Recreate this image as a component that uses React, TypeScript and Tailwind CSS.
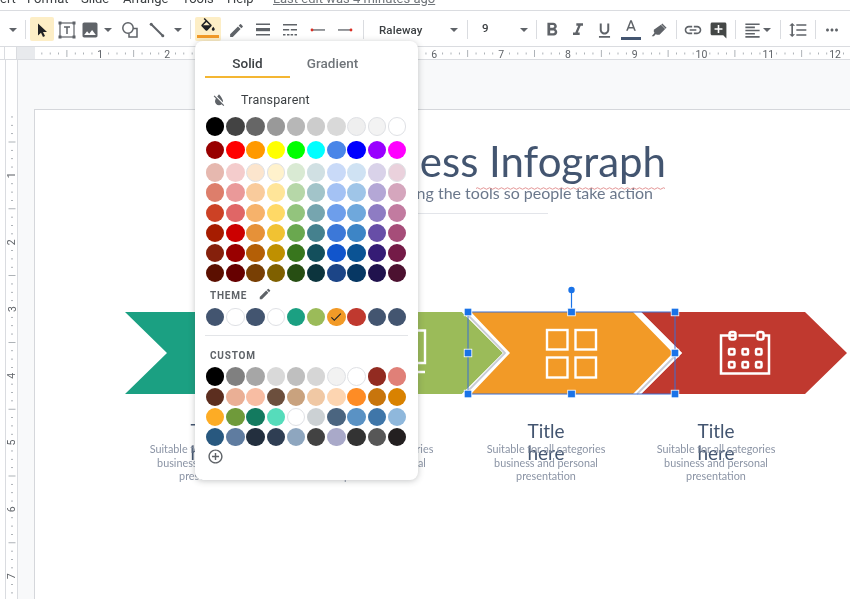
import React from "react";
import {
  MdEdit, MdFormatBold, MdFormatItalic, MdFormatUnderlined, MdLink, MdAddComment,
  MdFormatAlignLeft, MdFormatLineSpacing, MdMoreHoriz, MdImage, MdFormatColorReset, MdCheck,
  MdAddCircleOutline,
} from "react-icons/md";

const ICON = "#5f6368";

const rowsA = [
  ["#000000","#434343","#666666","#999999","#b7b7b7","#cccccc","#d9d9d9","#efefef","#f3f3f3","#ffffff"],
  ["#980000","#ff0000","#ff9900","#ffff00","#00ff00","#00ffff","#4a86e8","#0000ff","#9900ff","#ff00ff"],
];
const rowsB = [
  ["#e6b8af","#f4cccc","#fce5cd","#fff2cc","#d9ead3","#d0e0e3","#c9daf8","#cfe2f3","#d9d2e9","#ead1dc"],
  ["#dd7e6b","#ea9999","#f9cb9c","#ffe599","#b6d7a8","#a2c4c9","#a4c2f4","#9fc5e8","#b4a7d6","#d5a6bd"],
  ["#cc4125","#e06666","#f6b26b","#ffd966","#93c47d","#76a5af","#6d9eeb","#6fa8dc","#8e7cc3","#c27ba0"],
  ["#a61c00","#cc0000","#e69138","#f1c232","#6aa84f","#45818e","#3c78d8","#3d85c6","#674ea7","#a64d79"],
  ["#85200c","#990000","#b45f06","#bf9000","#38761d","#134f5c","#1155cc","#0b5394","#351c75","#741b47"],
  ["#5b0f00","#660000","#783f04","#7f6000","#274e13","#0c343d","#1c4587","#073763","#20124d","#4c1130"],
];
const theme = ["#435570","#ffffff","#435570","#ffffff","#1ba082","#9bbb59","#f29a27","#c0392f","#435570","#435570"];
const custom = [
  ["#000000","#808080","#a6a6a6","#d9d9d9","#bfbfbf","#d6d6d6","#f2f2f2","#ffffff","#922b21","#e08078"],
  ["#5c2e1f","#eaaf95","#f8bda3","#6c4f3d","#c9a27e","#f0c8a4","#fdd5b1","#fe8c25","#c8750c","#d98200"],
  ["#fdac25","#6f9a3a","#137a5f","#56dcbb","#ffffff","#ccd1d4","#4b6580","#5a92c4","#3f76a9","#8fb8dc"],
  ["#28587f","#5f7ca0","#232f3e","#2f3e53","#8ea6bf","#424242","#a9a9c9","#333333","#575757","#231f20"],
];
const LIGHT = ["#ffffff","#f3f3f3","#efefef","#f2f2f2","#fff2cc","#fce5cd","#ead1dc"];

function Swatch({ c, checked }: { c: string; checked?: boolean }) {
  return (
    <div className="w-[20.2px] h-full flex items-center justify-center">
      <div
        className={"w-[18.4px] h-[18.4px] rounded-full flex items-center justify-center " + (LIGHT.includes(c) ? "border border-[#dfe1e5]" : "")}
        style={{ backgroundColor: c }}
      >
        {checked && <MdCheck size={14} color="#202124" />}
      </div>
    </div>
  );
}

function Rows({ rows, className }: { rows: string[][]; className: string }) {
  return (
    <div className={className}>
      {rows.map((r, i) => (
        <div key={i} className="flex h-[20.1px]">
          {r.map((c, j) => <Swatch key={j} c={c} />)}
        </div>
      ))}
    </div>
  );
}

const Caret = () => (
  <svg width="8" height="4" viewBox="0 0 8 4"><path d="M0 0h8L4 4z" fill={ICON} /></svg>
);
const Sep = ({ className }: { className: string }) => <div className={"w-px h-[19px] bg-[#dadce0] shrink-0 " + className} />;

function Cell({ w, children, className = "" }: { w: string; children?: React.ReactNode; className?: string }) {
  return <div className={"h-[24px] pt-[2px] flex items-center justify-center shrink-0 " + w + " " + className}>{children}</div>;
}

function Toolbar() {
  return (
    <div className="h-[36px] flex items-center border-b border-[#dadce0] pt-[1px] bg-white text-[#444746]">
      <Cell w="w-[25px]"><Caret /></Cell>
      <Sep className="" />
      <Cell w="w-[24px]" className="ml-[4px] bg-[#fdeec6] rounded-[2px]">
        <svg width="16" height="16" viewBox="0 0 16 16"><path d="M4 1.5v12l3-2.8 2 4.3 2-1-2-4.1h4z" fill="#202124" /></svg>
      </Cell>
      <Cell w="w-[24px]" className="ml-[1px]">
        <svg width="18" height="18" viewBox="0 0 18 18" fill="none" stroke={ICON}>
          <rect x="2" y="2" width="14" height="14" strokeWidth="1.2" />
          <path d="M6 6h6M9 6v7" strokeWidth="1.5" />
          <g fill={ICON} stroke="none"><rect x="0.5" y="0.5" width="3" height="3" /><rect x="14.5" y="0.5" width="3" height="3" /><rect x="0.5" y="14.5" width="3" height="3" /><rect x="14.5" y="14.5" width="3" height="3" /></g>
        </svg>
      </Cell>
      <Cell w="w-[22px]"><MdImage size={20} color={ICON} /></Cell>
      <Cell w="w-[14px]"><Caret /></Cell>
      <Cell w="w-[24px]" className="ml-[3px]">
        <svg width="18" height="18" viewBox="0 0 18 18" fill="none" stroke={ICON} strokeWidth="1.5">
          <circle cx="7" cy="7" r="5.2" /><path d="M12 7.500h4V16H8v-3.500" />
        </svg>
      </Cell>
      <Cell w="w-[24px]" className="ml-[3px]">
        <svg width="18" height="18" viewBox="0 0 18 18"><path d="M3 3l12 12" stroke={ICON} strokeWidth="2" /><circle cx="3.2" cy="3.2" r="1.5" fill={ICON} /><circle cx="14.8" cy="14.8" r="1.5" fill={ICON} /></svg>
      </Cell>
      <Cell w="w-[14px]" className="ml-[2px]"><Caret /></Cell>
      <Sep className="ml-[5px]" />
      <Cell w="w-[26px]" className="ml-[4px] bg-[#fdeec6] rounded-[2px] relative">
        <svg width="18" height="18" viewBox="0 0 24 24" className="-mt-[7px]">
          <path d="M16.56 8.94L7.62 0 6.21 1.41l2.38 2.38-5.15 5.15c-.59.59-.59 1.54 0 2.12l5.5 5.5c.29.29.68.44 1.06.44s.77-.15 1.06-.44l5.5-5.5c.59-.58.59-1.53 0-2.12zM5.21 10L10 5.21 14.79 10H5.21zM19 11.5s-2 2.17-2 3.5c0 1.1.9 2 2 2s2-.9 2-2c0-1.33-2-3.5-2-3.5z" fill="#202124" />
          <path d="M5 10h10l-6 6z" fill="#202124" />
        </svg>
        <div className="absolute left-[2px] right-[2px] bottom-[3px] h-[3px] bg-[#f29a27]" />
      </Cell>
      <Cell w="w-[24px]" className="ml-[3px]"><MdEdit size={17} color={ICON} /></Cell>
      <Cell w="w-[24px]" className="ml-[3px]">
        <svg width="16" height="16" viewBox="0 0 16 16" fill={ICON}><rect x="1" y="1.5" width="14" height="1.5" /><rect x="1" y="6" width="14" height="3.2" /><rect x="1" y="12" width="14" height="1.5" /></svg>
      </Cell>
      <Cell w="w-[24px]" className="ml-[3px]">
        <svg width="16" height="16" viewBox="0 0 16 16" fill={ICON}><rect x="1" y="2" width="14" height="1.5" /><rect x="1" y="7" width="6.2" height="1.5" /><rect x="8.8" y="7" width="6.2" height="1.5" /><path d="M1 12h2.5v1.5H1zM5 12h2.5v1.5H5zM8.6 12h2.5v1.5H8.6zM12.5 12H15v1.5h-2.500z" /></svg>
      </Cell>
      <Cell w="w-[24px]" className="ml-[4px]">
        <svg width="16" height="6" viewBox="0 0 16 6"><rect x="1" y="2.300" width="14" height="1.300" fill={ICON} /><circle cx="2" cy="3" r="1.400" fill="#d93025" /></svg>
      </Cell>
      <Cell w="w-[24px]" className="ml-[3px]">
        <svg width="16" height="6" viewBox="0 0 16 6"><rect x="1" y="2.300" width="14" height="1.300" fill={ICON} /><circle cx="14" cy="3" r="1.400" fill="#d93025" /></svg>
      </Cell>
      <Sep className="ml-[6px]" />
      <div className="ml-[15px] w-[70px] mt-[3px] text-[11.5px] font-medium tracking-[0.1px] text-[#3c4043] shrink-0">Raleway</div>
      <Cell w="w-[10px]"><Caret /></Cell>
      <Sep className="ml-[8px]" />
      <div className="ml-[14px] w-[37px] text-[11.500px] font-medium text-[#3c4043] shrink-0">9</div>
      <Cell w="w-[10px]"><Caret /></Cell>
      <Sep className="ml-[7px]" />
      <Cell w="w-[22px]" className="ml-[4px]"><MdFormatBold size={22} color={ICON} /></Cell>
      <Cell w="w-[22px]" className="ml-[4px]"><MdFormatItalic size={20} color={ICON} /></Cell>
      <Cell w="w-[22px]" className="ml-[4px]"><MdFormatUnderlined size={19} color={ICON} /></Cell>
      <Cell w="w-[24px]" className="ml-[4px] relative">
        <svg width="18" height="18" viewBox="0 0 24 24" className="-mt-[7px]"><path d="M11 3L5.500 17h2.250l1.120-3h6.250l1.120 3h2.250L13 3h-2zm-1.380 9L12 5.670 14.380 12H9.620z" fill={ICON} /></svg>
        <div className="absolute left-[2px] right-[2px] bottom-[1px] h-[3px] bg-[#435570]" />
      </Cell>
      <Cell w="w-[24px]" className="ml-[4px]">
        <svg width="17" height="17" viewBox="0 0 24 24" fill={ICON}><path d="M14 4l6 6-8 8H8l-1-1-3 3H1l4-5-1-1v-3z" /><path d="M16 2l6 6-1.500 1.500-6-6z" /></svg>
      </Cell>
      <Sep className="ml-[5px]" />
      <Cell w="w-[24px]" className="ml-[4px]"><MdLink size={20} color={ICON} /></Cell>
      <Cell w="w-[24px]" className="ml-[1px]"><MdAddComment size={19} color="#444746" /></Cell>
      <Sep className="ml-[5px]" />
      <Cell w="w-[20px]" className="ml-[6px]"><MdFormatAlignLeft size={19} color={ICON} /></Cell>
      <Cell w="w-[10px]"><Caret /></Cell>
      <Sep className="ml-[8px]" />
      <Cell w="w-[24px]" className="ml-[5px]"><MdFormatLineSpacing size={20} color={ICON} /></Cell>
      <Sep className="ml-[5px]" />
      <Cell w="w-[24px]" className="ml-[4px]"><MdMoreHoriz size={18} color={ICON} /></Cell>
    </div>
  );
}

function HRuler() {
  const ticks: React.ReactNode[] = [];
  for (let i = 1; i < 100; i++) {
    const x = 33.5 + i * 8.35;
    if (i % 8 === 0) {
      ticks.push(<text key={i} x={x} y={10.5} textAnchor="middle" fontSize="10.5" fill="#5f6368" fontFamily="Roboto">{i / 8}</text>);
    } else if (i % 4 === 0) {
      ticks.push(<rect key={i} x={x - 0.4} y={3} width={0.8} height={7} fill="#9aa0a6" />);
    } else {
      ticks.push(<rect key={i} x={x - 0.4} y={5.5} width={0.8} height={2} fill="#9aa0a6" />);
    }
  }
  return (
    <div className="h-[13px] flex bg-white border-b border-[#dadce0]">
      <div className="w-[5px] border-r border-[#dadce0]" />
      <div className="w-[12px] border-r border-[#dadce0]" />
      <div className="w-[18px] bg-[#e8eaed]" />
      <svg className="flex-1 h-[12px]" viewBox="35 0 815 12">{ticks}</svg>
    </div>
  );
}

function VRuler() {
  const ticks: React.ReactNode[] = [];
  for (let i = 1; i < 70; i++) {
    const y = 108.6 + i * 8.35 - 60;
    if (i % 8 === 0) {
      ticks.push(<text key={i} x={6} y={y + 3.5} textAnchor="middle" fontSize="10.5" fill="#5f6368" fontFamily="Roboto" transform={`rotate(-90 6 ${y})`}>{i / 8}</text>);
    } else if (i % 4 === 0) {
      ticks.push(<rect key={i} x={2.500} y={y - 0.4} width={7} height={0.8} fill="#9aa0a6" />);
    } else {
      ticks.push(<rect key={i} x={5} y={y - 0.4} width={2} height={0.8} fill="#9aa0a6" />);
    }
  }
  return (
    <div className="w-[18px] flex shrink-0 bg-white">
      <div className="w-[6px] border-r border-[#dadce0]" />
      <svg className="w-[11px] h-full" viewBox="0 0 11 539" preserveAspectRatio="xMinYMin meet">{ticks}</svg>
      <div className="w-px bg-[#dadce0]" />
    </div>
  );
}

function Artwork() {
  const squiggle = "M476 188.500q1.500-1.500 3 0" + "t3 0".repeat(62);
  return (
    <svg className="absolute left-0 top-0 w-[815px] h-[489px]" viewBox="35 110 815 489">
      <path d="M125 312H330V394H125L167 353Z" fill="#1ba082" />
      <path d="M330 312H462L503 353L462 394H330Z" fill="#9bbb59" />
      <path d="M418 330.500H425V363H418M418 372H425" fill="none" stroke="#fff" strokeWidth="2.400" />
      <path d="M641 312H805L847 353L805 394H641L682 353Z" fill="#c0392f" />
      <path d="M462 312L503 353L462 394H472L510 353L472 312Z" fill="#fff" />
      <path d="M466 393L505 353L466 313" fill="none" stroke="#c9ccd6" strokeWidth="1.800" />
      <path d="M633 312L673 353L633 394H641L682 353L641 312Z" fill="#fff" />
      <path d="M637 394L677 354" fill="none" stroke="#c9ccd6" strokeWidth="1.800" />
      <path d="M471 312H633L673 353L633 394H471L510 353Z" fill="#f29a27" />
      <g fill="none" stroke="#fff" strokeWidth="2.400">
        <rect x="547" y="330" width="20.500" height="19.500" /><rect x="575.500" y="330" width="20.500" height="19.500" />
        <rect x="547" y="357.500" width="20.500" height="20" /><rect x="575.500" y="357.500" width="20.500" height="20" />
      </g>
      <g fill="none" stroke="#fff" strokeWidth="2.500">
        <path d="M735 335.500H721V373.500H769V335.500H763.500M738.500 335.500H755.500" />
        <rect x="729.500" y="332" width="6" height="7.500" rx="2" /><rect x="757.500" y="332" width="6" height="7.500" rx="2" />
        <rect x="729" y="349" width="5.500" height="5.500" rx="1" /><rect x="742.500" y="349" width="5.500" height="5.500" rx="1" /><rect x="756" y="349" width="5.500" height="5.500" rx="1" />
        <rect x="729" y="362" width="5.500" height="5.500" rx="1" /><rect x="742.500" y="362" width="5.500" height="5.500" rx="1" /><rect x="756" y="362" width="5.500" height="5.500" rx="1" />
      </g>
      <path d={squiggle} fill="none" stroke="#e08a8a" strokeWidth="0.900" />
      <rect x="400" y="213" width="148" height="1" fill="#e3e5ea" />
      <g stroke="#3b6fd4" fill="none">
        <rect x="468" y="312" width="207" height="82" strokeWidth="1" />
        <path d="M571.500 290V312" strokeWidth="1.200" stroke="#1a73e8" />
      </g>
      <circle cx="571.500" cy="290" r="3.200" fill="#1a73e8" />
      <g fill="#1a73e8" stroke="#fff" strokeWidth="0.800">
        {[468, 571.5, 675].flatMap((x) =>
          [312, 353, 394].filter((y) => !(x === 571.5 && y === 353)).map((y) => (
            <rect key={`${x}-${y}`} x={x - 3.8} y={y - 3.8} width={7.6} height={7.6} />
          ))
        )}
      </g>
    </svg>
  );
}

function Captions() {
  const offsets = ["translate-x-[3px]", "-translate-x-[2px]", "", ""];
  return (
    <div className="absolute left-[86px] top-[310px] w-[680px] grid grid-cols-4 text-center font-['Lato',sans-serif]">
      {offsets.map((o, i) => (
        <div key={i} className={o}>
          <div className="text-[19px] leading-[22px] text-[#435570]">Title<br />here</div>
          <div className="-mt-[22px] text-[10.800px] leading-[13.500px] text-[#8b94a5]">
            Suitable for all categories<br />business and personal<br />presentation
          </div>
        </div>
      ))}
    </div>
  );
}

function Popup() {
  return (
    <div className="absolute left-[195px] top-[41px] w-[223px] h-[439px] bg-white rounded-[8px] shadow-[0_1px_6px_rgba(60,64,67,0.3)] font-['Roboto',sans-serif]">
      <div className="flex pl-[10px]">
        <div className="w-[85px] h-[37px] pt-[13px] text-center text-[13.500px] leading-[18px] font-medium text-[#3c4043] border-b-2 border-[#f4b632]">Solid</div>
        <div className="w-[85px] h-[37px] pt-[13px] text-center text-[13.500px] leading-[18px] font-medium text-[#70757a]">Gradient</div>
      </div>
      <div className="mt-[12px] h-[20px] flex items-center pl-[16px] gap-[14px]">
        <MdFormatColorReset size={16} color={ICON} />
        <span className="text-[12.500px] tracking-[0.2px] text-[#3c4043]">Transparent</span>
      </div>
      <div className="mt-[6.600px] pl-[10.200px] flex flex-col gap-y-[3.200px]">
        {rowsA.map((r, i) => (
          <div key={i} className="flex h-[20.100px]">{r.map((c, j) => <Swatch key={j} c={c} />)}</div>
        ))}
      </div>
      <Rows rows={rowsB} className="mt-[2.500px] pl-[10.200px]" />
      <div className="mt-[5px] h-[15px] pl-[15px] flex items-center gap-[11px] text-[10px] font-bold tracking-[0.8px] text-[#5f6368]">
        <span>THEME</span>
        <MdEdit size={14} color={ICON} className="-mt-[4px]" />
      </div>
      <div className="mt-[4px] pl-[10.200px] flex h-[20.100px]">
        {theme.map((c, j) => <Swatch key={j} c={c} checked={j === 6} />)}
      </div>
      <div className="mt-[8px] mx-[10px] h-px bg-[#e3e5e8]" />
      <div className="mt-[11.500px] h-[15px] pl-[15px] flex items-center text-[10px] font-bold tracking-[0.8px] text-[#5f6368]">CUSTOM</div>
      <Rows rows={custom} className="mt-[4px] pl-[10.200px]" />
      <div className="mt-[0.500px] pl-[12px]">
        <MdAddCircleOutline size={17} color={ICON} />
      </div>
    </div>
  );
}

export default function App() {
  return (
    <div className="relative w-[850px] h-[599px] overflow-hidden bg-white font-['Roboto',sans-serif] blur-[0.4px]">
      <div className="h-[11px] overflow-hidden border-b border-[#dadce0]">
        <div className="flex -mt-[10px] text-[13px] leading-[18px] text-[#3c4043] whitespace-nowrap">
          <span className="w-[27px]">ert</span>
          <span className="w-[54px]">Format</span>
          <span className="w-[42px]">Slide</span>
          <span className="w-[59px]">Arrange</span>
          <span className="w-[45px]">Tools</span>
          <span className="w-[46px]">Help</span>
          <span className="underline text-[#70757a]">Last edit was 4 minutes ago</span>
        </div>
      </div>
      <Toolbar />
      <HRuler />
      <div className="flex h-[539px] bg-[#f8f9fa]">
        <VRuler />
        <div className="flex-1 pt-[49px] pl-[16px] overflow-hidden">
          <div className="relative h-[500px] w-[900px] bg-white border-l border-t border-[#d5d7db]">
            <div className="absolute left-[231px] top-[26px] w-[400px] text-right whitespace-nowrap font-['Lato',sans-serif] text-[#435570] text-[42px] leading-[50px]">
              Business Infograph
            </div>
            <div className="absolute left-[218px] top-[72px] w-[400px] text-right whitespace-nowrap font-['Lato',sans-serif] text-[#6b788c] text-[16px] leading-[22px]">
              Using the tools so people take action
            </div>
            <Artwork />
            <Captions />
          </div>
        </div>
      </div>
      <Popup />
    </div>
  );
}
